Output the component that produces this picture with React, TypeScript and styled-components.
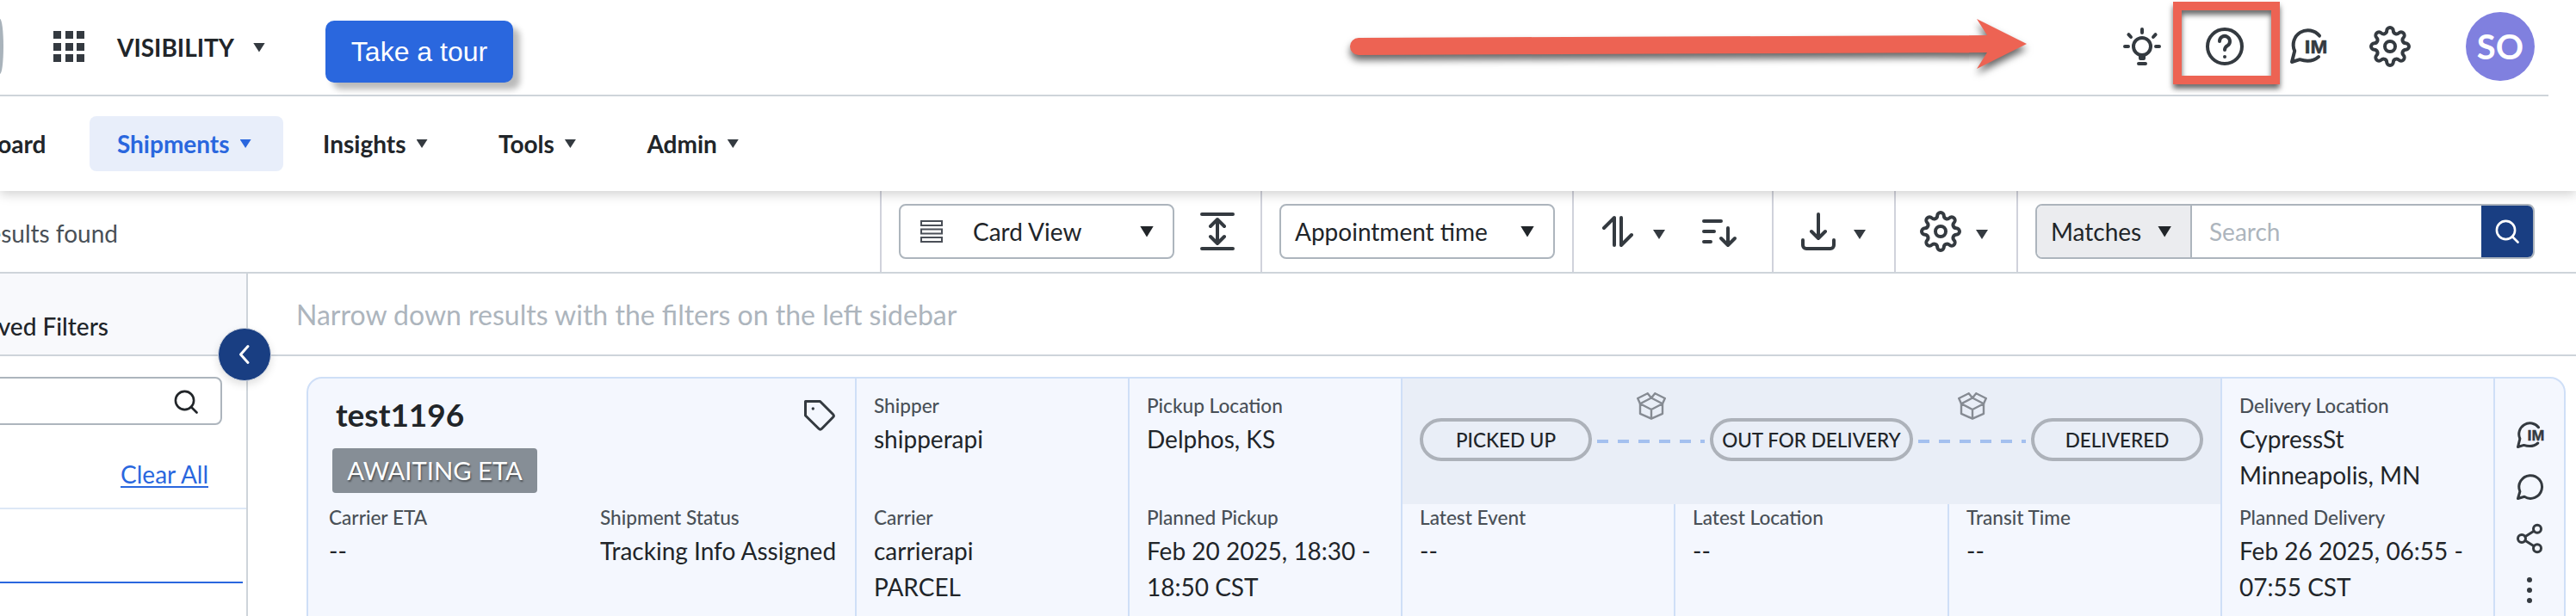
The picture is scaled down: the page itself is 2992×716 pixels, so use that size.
import React from "react";
import styled, { createGlobalStyle } from "styled-components";

const c = {
  ink: "#212529",
  icon: "#343a40",
  label: "#495057",
  muted: "#adb5bd",
  line: "#ced4da",
  blue: "#2a67de",
  navy: "#193e82",
  cardLine: "#cfdff7",
  card: "#f4f7fe",
  red: "#ed6353",
};

const GlobalStyle = createGlobalStyle`
  * { box-sizing: border-box; }
  body {
    margin: 0;
    background: #fff;
    color: ${c.ink};
    font-family: Lato, "Open Sans", sans-serif;
    font-size: 28px;
    line-height: 42px;
    white-space: nowrap;
  }
  svg { display: block; flex: none; }
`;

const Page = styled.div`
  position: relative;
  width: 2992px;
  height: 716px;
  overflow: hidden;
  display: flex;
  flex-direction: column;
`;

/* ---------- header ---------- */
const Header = styled.header`
  position: relative;
  z-index: 1;
  flex: none;
  height: 222px;
  background: #fff;
  box-shadow: 0 4px 12px rgba(0, 0, 0, 0.18);
`;

const TopBar = styled.div`
  width: 2960px;
  height: 112px;
  display: flex;
  align-items: center;
  border-bottom: 2px solid ${c.line};
  padding: 0 16px 2px 0;
`;

const Disc = styled.div`
  flex: none;
  width: 8px;
  height: 64px;
  margin-left: -4px;
  border-radius: 50%;
  background: #a9b3bb;
`;

const AppGrid = styled.div`
  display: grid;
  grid-template-columns: repeat(3, 9px);
  grid-auto-rows: 9px;
  gap: 4.5px;
  margin: 0 38px 0 58px;
  i { background: ${c.icon}; }
`;

const AppName = styled.div`
  display: flex;
  align-items: center;
  gap: 22px;
  width: 242px;
  padding-top: 2px;
  font-weight: 700;
`;

const TourButton = styled.button`
  width: 218px;
  height: 72px;
  margin-top: 12px;
  border: 0;
  border-radius: 10px;
  background: ${c.blue};
  color: #fff;
  font: 32px "Liberation Sans", sans-serif;
  box-shadow: 8px 8px 7px rgba(0, 0, 0, 0.27);
`;

const Actions = styled.div`
  margin-left: auto;
  display: flex;
  align-items: center;
  gap: 48px;
`;

const Avatar = styled.div`
  width: 80px;
  height: 80px;
  margin-left: 16px;
  border-radius: 50%;
  background: #8080df;
  color: #fff;
  font-size: 40px;
  font-weight: 700;
  line-height: 80px;
  text-align: center;
`;

const Nav = styled.nav`
  display: flex;
  align-items: center;
  gap: 14.5px;
  height: 110px;
  margin-left: -114px;
`;

const NavItem = styled.a<{ $active?: boolean }>`
  display: flex;
  align-items: center;
  gap: 12px;
  height: 64px;
  padding: 0 ${(p) => (p.$active ? 37 : 36)}px 0 32px;
  border-radius: 8px;
  font-weight: 700;
  color: ${(p) => (p.$active ? c.blue : c.ink)};
  background: ${(p) => (p.$active ? "#e8eefa" : "transparent")};
`;

const Caret = styled.span<{ $w: number; $h: number; $color?: string; $drop?: number }>`
  flex: none;
  width: ${(p) => p.$w}px;
  height: ${(p) => p.$h}px;
  margin-top: ${(p) => p.$drop ?? 0}px;
  background: ${(p) => p.$color ?? c.icon};
  clip-path: polygon(0 0, 100% 0, 50% 100%);
`;

/* ---------- toolbar ---------- */
const Toolbar = styled.div`
  flex: none;
  height: 96px;
  display: flex;
  border-bottom: 2px solid ${c.line};
`;

const ResultCount = styled.div`
  width: 1022px;
  padding-top: 28px;
  display: flex;
  color: ${c.label};
  span { width: 137px; display: flex; justify-content: flex-end; }
`;

const ToolGroup = styled.div<{ $w: number; $pad: number; $gap?: number }>`
  flex: none;
  display: flex;
  align-items: center;
  gap: ${(p) => p.$gap ?? 0}px;
  width: ${(p) => p.$w}px;
  padding-left: ${(p) => p.$pad}px;
  border-left: 2px solid #d0d2db;
`;

const ToolSpacer = styled.span`
  width: 5px;
`;

const Select = styled.div<{ $pad: number }>`
  display: flex;
  align-items: center;
  gap: 35px;
  width: 320px;
  height: 64px;
  padding: 0 22px 0 ${(p) => p.$pad}px;
  border: 2px solid ${c.muted};
  border-radius: 8px;
  span:last-child { margin-left: auto; }
`;

const SearchGroup = styled.div`
  display: flex;
  width: 580px;
  height: 64px;
  border: 2px solid ${c.muted};
  border-radius: 8px;
  overflow: hidden;
`;

const MatchSelect = styled.div`
  display: flex;
  align-items: center;
  gap: 19px;
  width: 180px;
  padding-left: 16px;
  background: #ebecef;
  border-right: 2px solid ${c.muted};
`;

const SearchField = styled.div`
  flex: 1;
  padding: 9px 20px;
  color: ${c.muted};
`;

const SearchButton = styled.div`
  width: 60px;
  padding: 16px 16px;
  background: ${c.navy};
`;

/* ---------- body ---------- */
const Body = styled.div`
  flex: 1;
  min-height: 0;
  display: flex;
`;

const Sidebar = styled.aside`
  position: relative;
  flex: none;
  width: 288px;
  border-right: 2px solid ${c.line};
`;

const SideTab = styled.div`
  display: flex;
  justify-content: flex-end;
  height: 96px;
  padding: 40px 160px 0 0;
  font-weight: 500;
  background: #f8f9fc;
  border-bottom: 2px solid ${c.line};
`;

const SideSearch = styled.div`
  display: flex;
  justify-content: flex-end;
  width: 278px;
  height: 56px;
  margin: 24px 0 0 -20px;
  padding: 13px 26px 0 0;
  border: 2px solid ${c.muted};
  border-radius: 8px;
`;

const ClearRow = styled.div`
  display: flex;
  justify-content: flex-end;
  height: 98px;
  padding: 36px 44px 0 0;
  border-bottom: 2px solid #dde8f6;
  color: ${c.blue};
  text-decoration: underline;
  text-decoration-thickness: 2px;
  text-underline-offset: 3px;
`;

const ActiveRule = styled.div`
  width: 282px;
  height: 86px;
  border-bottom: 2px solid ${c.blue};
`;

const Collapse = styled.div`
  position: absolute;
  z-index: 2;
  left: 253px;
  top: 63px;
  width: 62px;
  height: 62px;
  padding: 14px;
  border: 1.5px solid #d5dae2;
  border-radius: 50%;
  background: ${c.navy};
  box-shadow: 0 4px 10px rgba(0, 0, 0, 0.12);
`;

const Main = styled.main`
  flex: 1;
  min-width: 0;
`;

const Hint = styled.div`
  height: 96px;
  padding: 27px 0 0 56px;
  border-bottom: 2px solid ${c.line};
  color: ${c.muted};
  font-size: 32px;
`;

const Card = styled.section`
  display: flex;
  width: 2624px;
  height: 340px;
  margin: 24px 0 0 68px;
  border: 2px solid ${c.cardLine};
  border-radius: 18px;
  background: ${c.card};
  overflow: hidden;
`;

const Column = styled.div<{ $w: number }>`
  flex: none;
  width: ${(p) => p.$w}px;
  padding: 15px 0 0 20px;
  border-right: 2px solid ${c.cardLine};
`;

const Summary = styled.div`
  flex: none;
  width: 637px;
  border-right: 2px solid ${c.cardLine};
`;

const TitleRow = styled.div`
  display: flex;
  justify-content: space-between;
  height: 81px;
  padding: 21px 23px 0 32px;
  font-size: 37px;
  font-weight: 700;
  svg { margin-top: 4px; }
`;

const Badge = styled.div`
  width: 238px;
  height: 52px;
  margin-left: 28px;
  border-radius: 4px;
  background: #868e96;
  color: #fff;
  font-size: 29.2px;
  line-height: 52px;
  text-align: center;
  text-shadow: 1px 2px 2px rgba(0, 0, 0, 0.45);
`;

const StatusRow = styled.div`
  display: flex;
  padding: 12px 0 0 24px;
`;

const Field = styled.div<{ $w?: number; $h?: number }>`
  width: ${(p) => (p.$w ? p.$w + "px" : "auto")};
  height: ${(p) => (p.$h ? p.$h + "px" : "auto")};
`;

const Label = styled.div`
  color: ${c.label};
  font-size: 22.6px;
  font-weight: 500;
  line-height: 34px;
`;

const Progress = styled.div`
  flex: none;
  width: 952px;
  border-right: 2px solid ${c.cardLine};
`;

const Track = styled.div`
  display: flex;
  height: 146px;
  padding: 46px 20px 0;
  background: #e9eef7;
`;

const Stage = styled.div<{ $w: number }>`
  flex: none;
  width: ${(p) => p.$w}px;
  height: 50px;
  border: 4px solid #adb2ba;
  border-radius: 25px;
  font-size: 22.5px;
  font-weight: 500;
  line-height: 43px;
  text-align: center;
`;

const Leg = styled.div`
  flex: 1;
  display: flex;
  flex-direction: column;
  align-items: center;
  margin-top: -30px;
`;

const Dashes = styled.div`
  width: 125px;
  height: 4px;
  margin-top: 23px;
  background: repeating-linear-gradient(90deg, #a4c0ef 0 13px, transparent 13px 24px);
`;

const Facts = styled.div`
  display: flex;
  height: 200px;
`;

const Fact = styled.div<{ $w: number; $last?: boolean }>`
  width: ${(p) => p.$w}px;
  padding-left: 20px;
  border-right: ${(p) => (p.$last ? "0" : "2px solid " + c.cardLine)};
  > div { margin-top: -1px; }
`;

const Rail = styled.div`
  flex: 1;
  display: flex;
  flex-direction: column;
  align-items: center;
  gap: 24px;
  padding-top: 48px;
`;

/* ---------- callouts over the page ---------- */
const ArrowCallout = styled.svg`
  position: absolute;
  z-index: 3;
  left: 1560px;
  top: 10px;
  filter: drop-shadow(0 6px 4px rgba(0, 0, 0, 0.6));
`;

const BoxCallout = styled.div`
  position: absolute;
  z-index: 3;
  left: 2524px;
  top: 2px;
  width: 124px;
  height: 96px;
  border: 10px solid ${c.red};
  filter: drop-shadow(0 5px 3px rgba(0, 0, 0, 0.6));
`;

/* ---------- icons ---------- */
const Icon = ({ size = 48, color = c.icon, w = 2, children }: { size?: number; color?: string; w?: number; children: React.ReactNode }) => (
  <svg width={size} height={size} viewBox="0 0 24 24" fill="none" stroke={color} strokeWidth={w} strokeLinecap="round" strokeLinejoin="round" overflow="visible">
    {children}
  </svg>
);

const gearPath = (() => {
  const rot = (x: number, y: number, k: number) => {
    const a = (k * Math.PI) / 4;
    return `${(12 + x * Math.cos(a) - y * Math.sin(a)).toFixed(2)} ${(12 + x * Math.sin(a) + y * Math.cos(a)).toFixed(2)}`;
  };
  let d = `M${rot(-1.9, -9.1, 0)}`;
  for (let k = 0; k < 8; k++) {
    d += `A1.9 1.9 0 0 1 ${rot(1.9, -9.1, k)}`;
    d += `A1.88 1.88 0 0 0 ${rot(-1.9, -9.1, k + 1)}`;
  }
  return d + "Z";
})();

const GearIcon = () => (
  <Icon>
    <path d={gearPath} />
    <circle cx="12" cy="12" r="3" />
  </Icon>
);

const BulbIcon = () => (
  <Icon>
    <circle cx="12" cy="12" r="5" />
    <path d="M11 17v2h2v-2M10 22h4M12 2v2M2 12h2M20 12h2M4.2 5.1l1.3 1.4M19.8 5.1l-1.3 1.4" />
  </Icon>
);

const HelpIcon = () => (
  <Icon>
    <circle cx="12" cy="12" r="10" />
    <path d="M9 9a3 3 0 1 1 4.6 2.5c-1 .6-1.6 1.2-1.6 2.5" />
    <circle cx="12" cy="18" r="1" fill={c.icon} stroke="none" />
  </Icon>
);

const ImIcon = ({ size }: { size?: number }) => (
  <Icon size={size}>
    <path d="M19 5.8A8.5 8.5 0 0 0 4.6 14.6L3 21l4.6-1.4c3.6 1.2 7.7 1.2 10.9-1.6" />
    <text x="10.400" y="16.100" fontSize="11.400" fontWeight="700" fontFamily="Liberation Sans, sans-serif" fill={c.icon} stroke={c.icon} strokeWidth="0.300" textLength="13.200" lengthAdjust="spacingAndGlyphs">IM</text>
  </Icon>
);

const ChatIcon = () => (
  <Icon size={36}>
    <path d="M4.6 15.500A8.900 8.900 0 1 1 8 19.500L3 21z" />
  </Icon>
);

const ShareIcon = () => (
  <Icon size={36}>
    <circle cx="18" cy="4.500" r="3" />
    <circle cx="6" cy="12" r="3" />
    <circle cx="18" cy="19.500" r="3" />
    <path d="M8.600 13.500l6.800 4.300M15.400 6.200l-6.800 4.300" />
  </Icon>
);

const DotsIcon = () => (
  <Icon size={36}>
    <g fill={c.icon} stroke="none">
      <circle cx="12" cy="4" r="2" />
      <circle cx="12" cy="12" r="2" />
      <circle cx="12" cy="20" r="2" />
    </g>
  </Icon>
);

const TagIcon = () => (
  <svg width="36" height="36" viewBox="0 0 36 36" fill="none" stroke={c.icon} strokeWidth="3" strokeLinejoin="round">
    <path d="M1.500 1.500H18.500L33.500 16.500a2.500 2.500 0 0 1 0 3.500L20.500 33.300a2.500 2.500 0 0 1-3.500 0L1.500 18Z" />
    <circle cx="10.300" cy="10" r="1.700" fill={c.icon} stroke="none" />
  </svg>
);

const MagnifierIcon = ({ color }: { color: string }) => (
  <svg width="28" height="28" viewBox="0 0 28 28" fill="none" stroke={color} strokeWidth="2.600" strokeLinecap="round">
    <circle cx="12.500" cy="12.500" r="10.600" />
    <path d="M20 20l6.500 6.500" />
  </svg>
);

const ListIcon = () => (
  <svg width="26" height="26" viewBox="0 0 26 26" fill="none" stroke="#4a4f57" strokeWidth="2">
    <path d="M1 1h24v5H1zM1 10.500h24v5H1zM1 20h24v5H1z" />
  </svg>
);

const BoxIcon = () => (
  <svg width="34" height="32" viewBox="0 0 34 32" fill="none" stroke="#868b93" strokeWidth="2.400" strokeLinejoin="round">
    <path d="M17 6.500L30 13.300 17 20 4 13.300ZM4 13.300V24.800L17 30.700 30 24.800V13.300M17 20V30.700" />
    <path d="M17 6.500L12.700 1.200 1.200 7 4 13.300M17 6.500L21.300 1.200 32.800 7 30 13.300" />
  </svg>
);

const Triangle = () => <Caret $w={16} $h={13} $color={c.ink} />;
const SmallTriangle = () => <Caret $w={14} $h={11} $drop={7} />;

const Item = ({ label, lines, w, h }: { label: string; lines: string[]; w?: number; h?: number }) => (
  <Field $w={w} $h={h}>
    <Label>{label}</Label>
    {lines.map((l) => (
      <div key={l}>{l}</div>
    ))}
  </Field>
);

export default function App() {
  return (
    <Page>
      <GlobalStyle />
      <Header>
        <TopBar>
          <Disc />
          <AppGrid>
            {Array.from({ length: 9 }, (_, i) => (
              <i key={i} />
            ))}
          </AppGrid>
          <AppName>
            VISIBILITY
            <Caret $w={14} $h={11} />
          </AppName>
          <TourButton>Take a tour</TourButton>
          <Actions>
            <BulbIcon />
            <HelpIcon />
            <ImIcon />
            <GearIcon />
            <Avatar>SO</Avatar>
          </Actions>
        </TopBar>
        <Nav>
          <NavItem>Dashboard</NavItem>
          <NavItem $active>
            Shipments
            <Caret $w={13} $h={10} $color={c.blue} />
          </NavItem>
          {["Insights", "Tools", "Admin"].map((n) => (
            <NavItem key={n}>
              {n}
              <Caret $w={13} $h={10} />
            </NavItem>
          ))}
        </Nav>
      </Header>

      <Toolbar>
        <ResultCount>
          <span>1 results found</span>
        </ResultCount>
        <ToolGroup $w={442} $pad={20} $gap={26}>
          <Select $pad={23}>
            <ListIcon />
            <span>Card View</span>
            <Triangle />
          </Select>
          <Icon>
            <path d="M3 2h18M3 22h18M12 5v14M8 9l4-4 4 4M8 15l4 4 4-4" />
          </Icon>
        </ToolGroup>
        <ToolGroup $w={362} $pad={20}>
          <Select $pad={16}>
            <span>Appointment time</span>
            <Triangle />
          </Select>
        </ToolGroup>
        <ToolGroup $w={232} $pad={27} $gap={17}>
          <Icon>
            <path d="M4 10l6-6v16M20 14l-6 6V4" />
          </Icon>
          <SmallTriangle />
          <ToolSpacer />
          <Icon>
            <path d="M3 6h10M3 12h6M3 18h4M17 10v10M13 16l4 4 4-4" />
          </Icon>
        </ToolGroup>
        <ToolGroup $w={142} $pad={28} $gap={17}>
          <Icon>
            <path d="M12 2v14M8 12l4 4 4-4M3 17v3a2 2 0 0 0 2 2h14a2 2 0 0 0 2-2v-3" />
          </Icon>
          <SmallTriangle />
        </ToolGroup>
        <ToolGroup $w={142} $pad={28} $gap={17}>
          <GearIcon />
          <SmallTriangle />
        </ToolGroup>
        <ToolGroup $w={640} $pad={20}>
          <SearchGroup>
            <MatchSelect>
              Matches
              <Triangle />
            </MatchSelect>
            <SearchField>Search</SearchField>
            <SearchButton>
              <MagnifierIcon color="#fff" />
            </SearchButton>
          </SearchGroup>
        </ToolGroup>
      </Toolbar>

      <Body>
        <Sidebar>
          <SideTab>Saved Filters</SideTab>
          <SideSearch>
            <MagnifierIcon color={c.ink} />
          </SideSearch>
          <ClearRow>Clear All</ClearRow>
          <ActiveRule />
          <Collapse>
            <svg width="31" height="31" viewBox="0 0 31 31" fill="none" stroke="#fff" strokeWidth="3" strokeLinecap="round" strokeLinejoin="round">
              <path d="M20 6.500L11.500 16 20 25.500" />
            </svg>
          </Collapse>
        </Sidebar>

        <Main>
          <Hint>Narrow down results with the filters on the left sidebar</Hint>
          <Card>
            <Summary>
              <TitleRow>
                test1196
                <TagIcon />
              </TitleRow>
              <Badge>AWAITING ETA</Badge>
              <StatusRow>
                <Item label="Carrier ETA" lines={["--"]} w={315} />
                <Item label="Shipment Status" lines={["Tracking Info Assigned"]} />
              </StatusRow>
            </Summary>
            <Column $w={317}>
              <Item label="Shipper" lines={["shipperapi"]} h={130} />
              <Item label="Carrier" lines={["carrierapi", "PARCEL"]} />
            </Column>
            <Column $w={317}>
              <Item label="Pickup Location" lines={["Delphos, KS"]} h={130} />
              <Item label="Planned Pickup" lines={["Feb 20 2025, 18:30 -", "18:50 CST"]} />
            </Column>
            <Progress>
              <Track>
                <Stage $w={200}>PICKED UP</Stage>
                <Leg>
                  <BoxIcon />
                  <Dashes />
                </Leg>
                <Stage $w={236}>OUT FOR DELIVERY</Stage>
                <Leg>
                  <BoxIcon />
                  <Dashes />
                </Leg>
                <Stage $w={200}>DELIVERED</Stage>
              </Track>
              <Facts>
                <Fact $w={317}>
                  <Item label="Latest Event" lines={["--"]} />
                </Fact>
                <Fact $w={318}>
                  <Item label="Latest Location" lines={["--"]} />
                </Fact>
                <Fact $w={315} $last>
                  <Item label="Transit Time" lines={["--"]} />
                </Fact>
              </Facts>
            </Progress>
            <Column $w={317}>
              <Item label="Delivery Location" lines={["CypressSt", "Minneapolis, MN"]} h={130} />
              <Item label="Planned Delivery" lines={["Feb 26 2025, 06:55 -", "07:55 CST"]} />
            </Column>
            <Rail>
              <ImIcon size={36} />
              <ChatIcon />
              <ShareIcon />
              <DotsIcon />
            </Rail>
          </Card>
        </Main>
      </Body>

      <ArrowCallout width="800" height="80" viewBox="0 0 800 80" fill={c.red}>
        <path d="M18 34 L748 31 L736 12 L794 41 L736 70 L748 51 L18 54 A10 10 0 0 1 18 34Z" />
      </ArrowCallout>
      <BoxCallout />
    </Page>
  );
}
